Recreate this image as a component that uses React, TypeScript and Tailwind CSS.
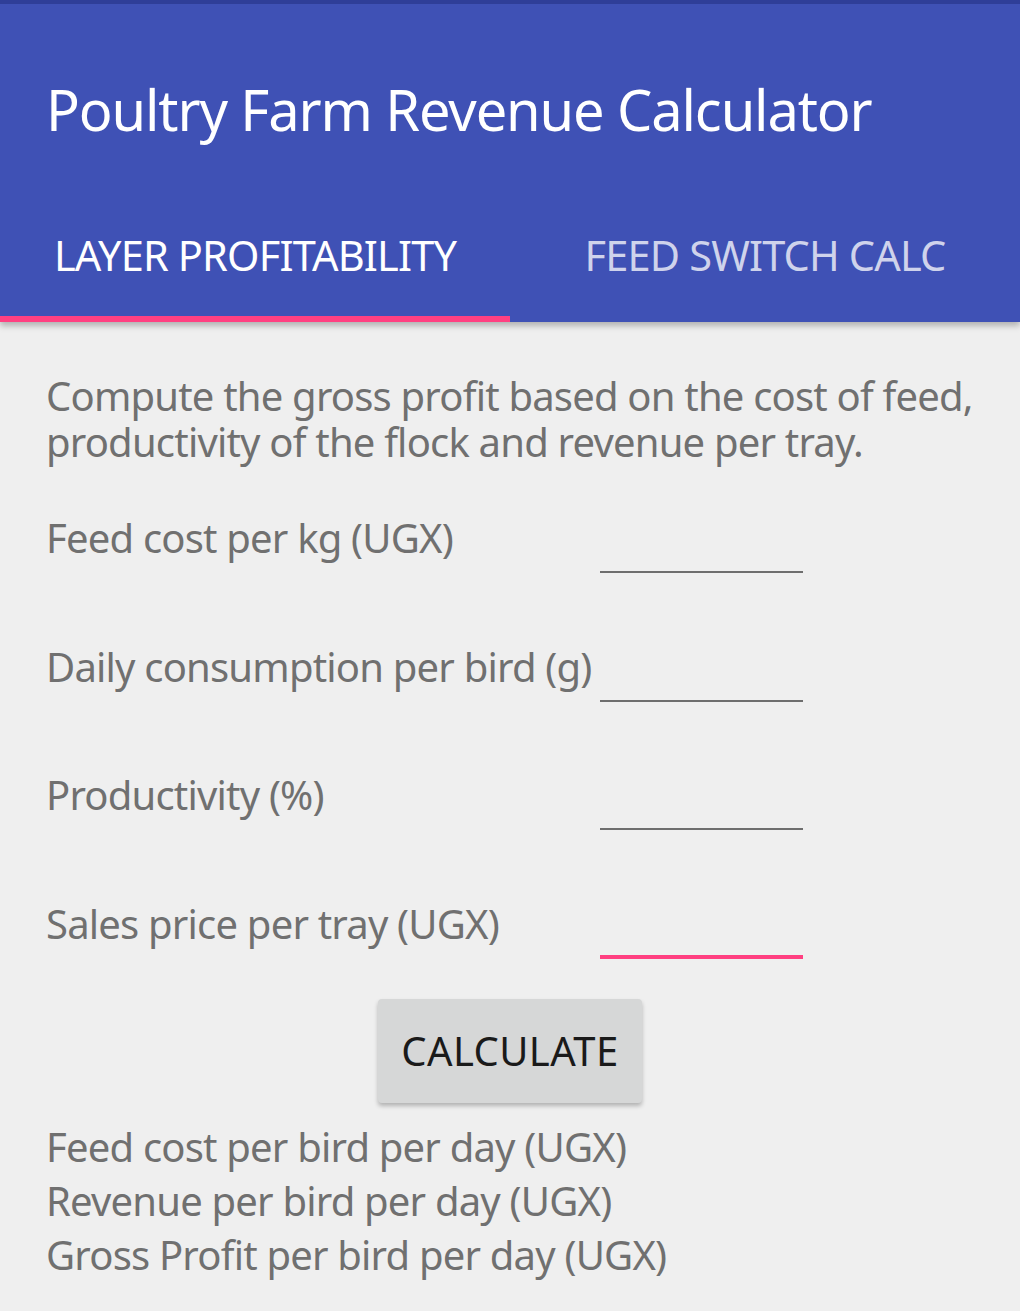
import React from "react";

const font = { fontFamily: '"Noto Sans", "Open Sans", sans-serif' };

function Row({ label, active }: { label: string; active?: boolean }) {
  return (
    <div className="flex h-[128.5px]">
      <div className="flex-1 h-full flex items-center">
        <span className="leading-none text-[40px] text-[#707070] tracking-[-0.02em]">{label}</span>
      </div>
      <div
        className={
          "w-[203px] h-[99px] " +
          (active ? "border-b-[4px] border-[#ff4081]" : "border-b-[2px] border-[#6e6e6e]")
        }
      />
    </div>
  );
}

export default function App() {
  return (
    <div style={font} className="w-[1020px] h-[1311px] bg-[#efefef] overflow-hidden">
      <div className="relative bg-[#3f51b5] border-t-[4px] border-[#2f3e98] shadow-[0_4px_6px_rgba(0,0,0,0.25)]">
        <div className="h-[192px] flex items-center pl-[46px]">
          <h1 className="text-white text-[56px] leading-none tracking-[-0.02em] mt-[18px]">
            Poultry Farm Revenue Calculator
          </h1>
        </div>
        <div className="flex h-[126px]">
          <div className="flex-1 flex flex-col">
            <div className="flex-1 flex items-center justify-center">
              <span className="text-white text-[41.5px] leading-none tracking-[-0.02em]">LAYER PROFITABILITY</span>
            </div>
            <div className="h-[6px] bg-[#ff4081]" />
          </div>
          <div className="flex-1 flex flex-col">
            <div className="flex-1 flex items-center justify-center">
              <span className="text-white/75 text-[41.5px] leading-none tracking-[-0.02em]">FEED SWITCH CALC</span>
            </div>
            <div className="h-[6px]" />
          </div>
        </div>
      </div>

      <div className="px-[46px] pt-[51px]">
        <p className="text-[40px] leading-[46px] text-[#707070] tracking-[-0.02em]">
          Compute the gross profit based on the cost of feed, productivity of the flock and revenue per tray.
        </p>
        <div className="mt-[9px] pr-[171px]">
          <Row label="Feed cost per kg (UGX)" />
          <Row label="Daily consumption per bird (g)" />
          <Row label="Productivity (%)" />
          <Row label="Sales price per tray (UGX)" active />
        </div>
        <div className="flex justify-center mt-[11px]">
          <button className="w-[264px] h-[104px] bg-[#d6d7d7] rounded-[4px] shadow-[0_3px_4px_rgba(0,0,0,0.25)] text-[40px] text-[#1a1a1a] tracking-[0.01em]">
            CALCULATE
          </button>
        </div>
        <div className="mt-[17px] text-[40px] leading-[54px] text-[#707070] tracking-[-0.02em]">
          <div>Feed cost per bird per day (UGX)</div>
          <div>Revenue per bird per day (UGX)</div>
          <div>Gross Profit per bird per day (UGX)</div>
        </div>
      </div>
    </div>
  );
}
